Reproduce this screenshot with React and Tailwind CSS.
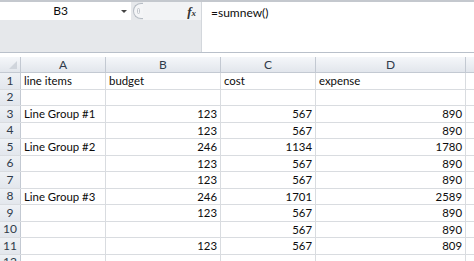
const cols = [
  { key: "A", w: "w-[85px]" },
  { key: "B", w: "w-[115px]" },
  { key: "C", w: "w-[95px]" },
  { key: "D", w: "w-[150px]" },
];

const rows = [
  ["line items", "budget", "cost", "expense"],
  ["", "", "", ""],
  ["Line Group #1", "123", "567", "890"],
  ["", "123", "567", "890"],
  ["Line Group #2", "246", "1134", "1780"],
  ["", "123", "567", "890"],
  ["", "123", "567", "890"],
  ["Line Group #3", "246", "1701", "2589"],
  ["", "123", "567", "890"],
  ["", "", "567", "890"],
  ["", "123", "567", "809"],
  ["", "", "", ""],
];

function Cell({ value, w }) {
  const isNum = /^\d+$/.test(value);
  return (
    <div
      className={`${w} shrink-0 h-full border-r border-[#d9dce0] flex items-center px-[3px] ${
        isNum ? "justify-end" : "justify-start"
      }`}
    >
      <span className="leading-none whitespace-nowrap">{value}</span>
    </div>
  );
}

export default function App() {
  return (
    <div
      className="w-[474px] h-[261px] overflow-hidden bg-white text-[#0c0c0c] text-[11.4px]"
      style={{ fontFamily: "Lato, 'Open Sans', sans-serif" }}
    >
      {/* formula bar */}
      <div className="h-[53px] flex border-t-2 border-b border-t-[#c4c8ce] border-b-[#b9c0ca]">
        <div className="w-[201px] shrink-0 bg-[#e6e8eb] flex flex-col">
          <div className="h-[18px] flex items-center">
            <div className="w-[131px] h-full bg-white flex items-center relative">
              <span className="flex-1 text-center pr-[10px] leading-none text-[12px]">B3</span>
              <span className="absolute right-[4px] top-[8px] w-0 h-0 border-l-[3px] border-r-[3px] border-t-[3px] border-l-transparent border-r-transparent border-t-[#444]"></span>
            </div>
            <div className="flex-1 h-full flex items-center">
              <div className="w-[10px] h-[16px] rounded-l-full border border-r-0 border-[#b6bcc4] bg-[#f4f5f7] flex items-center justify-center ml-[2px]">
                <div className="w-[3px] h-[6px] rounded-full border border-[#c2c6cc]"></div>
              </div>
              <div className="flex-1 h-full bg-[#f2f3f5] flex items-center justify-end pr-[5px]">
                <span
                  className="italic text-[#333] text-[13px] leading-none font-bold"
                  style={{ fontFamily: "'Liberation Serif', serif" }}
                >
                  f<span className="text-[9px]">x</span>
                </span>
              </div>
            </div>
          </div>
          <div className="flex-1"></div>
        </div>
        <div className="flex-1 bg-white border-l border-[#d3d7dc] pl-[9px] pt-[5px] leading-none text-[12px]">
          =sumnew()
        </div>
      </div>
      <div className="h-[4px] bg-white"></div>

      {/* grid */}
      <div className="flex flex-col">
        <div className="h-[16px] flex bg-gradient-to-b from-[#f5f7fa] to-[#e2e6ec] border-b border-[#c3c9d2] text-[#2f3b4a] text-[12px]">
          <div className="w-[21px] shrink-0 h-full border-r border-[#c3c9d2] relative">
            <span className="absolute right-[3px] bottom-[3px] w-0 h-0 border-b-[8px] border-l-[8px] border-l-transparent border-b-[#d0d5dc]"></span>
          </div>
          {cols.map((c) => (
            <div
              key={c.key}
              className={`${c.w} shrink-0 h-full border-r border-[#c3c9d2] flex items-center justify-center leading-none`}
            >
              {c.key}
            </div>
          ))}
          <div className="flex-1"></div>
        </div>
        {rows.map((r, i) => (
          <div key={i} className="h-[16.5px] shrink-0 flex border-b border-[#d9dce0]">
            <div className="w-[21px] shrink-0 h-full bg-gradient-to-b from-[#eef1f5] to-[#e3e7ed] border-r border-[#c3c9d2] flex items-center justify-center text-[#2f3b4a] leading-none text-[12px]">
              {i + 1}
            </div>
            {cols.map((c, j) => (
              <Cell key={c.key} value={r[j]} w={c.w} />
            ))}
            <div className="flex-1"></div>
          </div>
        ))}
      </div>
    </div>
  );
}
